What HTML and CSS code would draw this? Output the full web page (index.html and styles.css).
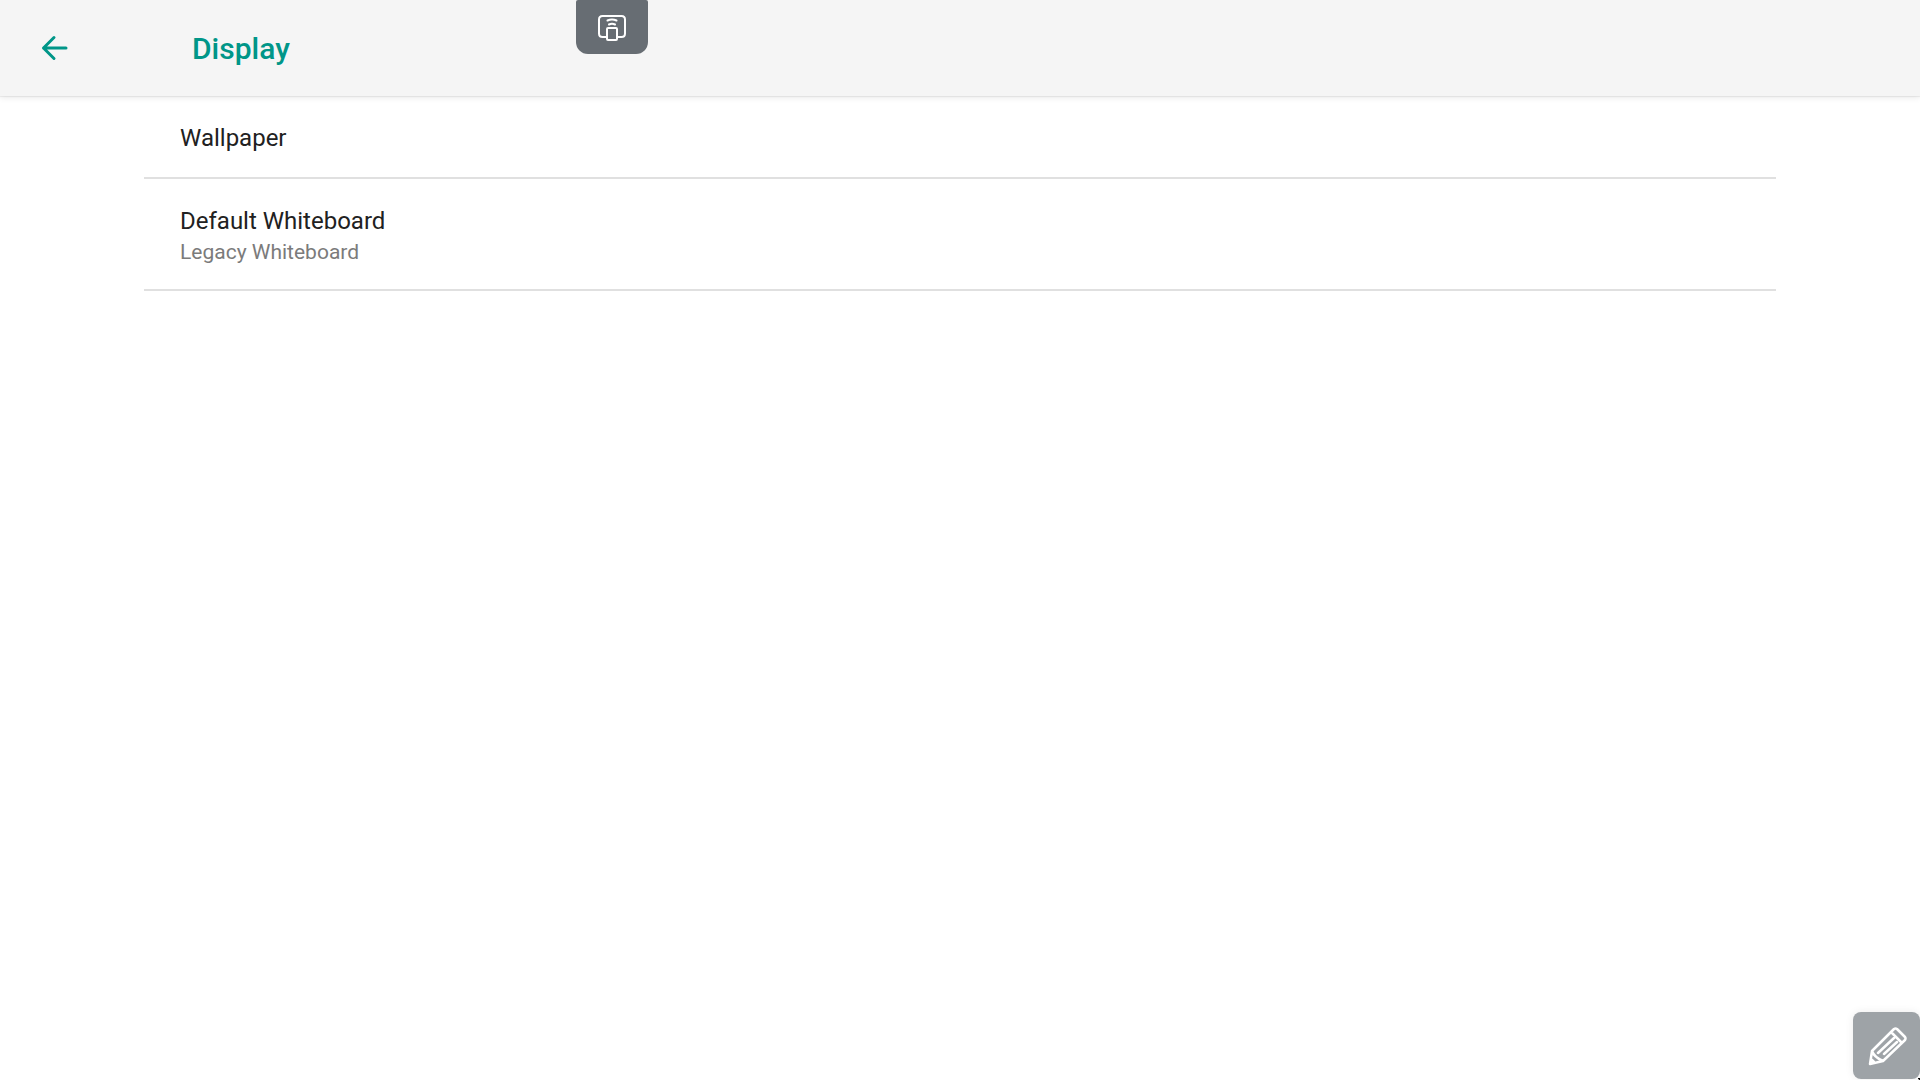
FILE: index.html
```html
<!DOCTYPE html>
<html lang="en">
<head>
<meta charset="utf-8">
<meta name="viewport" content="width=device-width, initial-scale=1">
<title>Display</title>
<link rel="stylesheet" href="styles.css">
</head>
<body>
<header class="app-bar">
  <button class="back" type="button" aria-label="Back">
    <svg class="back-icon" viewBox="0 0 28 26" aria-hidden="true"><path d="M14 2.500 3.500 13 14 23.500M3.500 13H26"/></svg>
  </button>
  <h1 class="title">Display</h1>
</header>
<main class="settings">
  <button class="row" type="button">
    <span class="row-title">Wallpaper</span>
  </button>
  <button class="row row-tall" type="button">
    <span class="row-title">Default Whiteboard</span>
    <span class="row-value">Legacy Whiteboard</span>
  </button>
</main>
<button class="share-tab" type="button" aria-label="Screen share">
  <svg class="share-icon" viewBox="0 0 28 27" aria-hidden="true">
    <path d="M8 23H4.500Q1 23 1 19.500V5.500Q1 2 4.500 2H23.500Q27 2 27 5.500V19.500Q27 23 23.500 23H20"/>
    <rect x="9" y="14" width="10" height="12" rx="1"/>
    <path d="M9.500 6.500Q14 4.500 18.500 6.500M11 10.500Q14 9 17 10.500"/>
  </svg>
</button>
<button class="pen" type="button" aria-label="Annotate">
  <svg class="pen-icon" viewBox="0 0 40 40" aria-hidden="true">
    <path stroke-width="2.500" d="M3 38 5 25 27 3Q28.500 2 30 3L38 11Q39 12.500 38 14L16 35ZM5 25Q7 31 16 35M24 6 35 17M11 27 27 12M17 28 30 16M3 38 4 33 7 36Z"/>
  </svg>
</button>
<svg class="pointer" viewBox="0 0 3 3" aria-hidden="true"><path d="M0 0H3V3H2L0 1Z"/></svg>
</body>
</html>
```
FILE: styles.css
```css
* {
  box-sizing: border-box;
}

body {
  margin: 0;
  min-height: 100vh;
  background: #fff;
  color: #212121;
  font-family: Roboto, "Liberation Sans", sans-serif;
}

button {
  margin: 0;
  padding: 0;
  border: 0;
  background: none;
  color: inherit;
  font: inherit;
  cursor: pointer;
}

svg {
  display: block;
  fill: none;
  stroke: currentColor;
  stroke-linecap: round;
  stroke-linejoin: round;
  stroke-width: 2;
}

.app-bar {
  display: flex;
  align-items: center;
  gap: 84px;
  height: 96px;
  background: #f5f5f5;
  color: #009688;
  box-shadow: 0 1px 1px rgba(0, 0, 0, 0.06), 0 2px 6px rgba(0, 0, 0, 0.08);
}

.back {
  display: grid;
  place-items: center;
  width: 108px;
  height: 96px;
}

.back-icon {
  width: 28px;
  height: 26px;
  stroke-width: 3;
}

.title {
  margin: 0;
  padding-top: 2px;
  font-size: 30px;
  font-weight: 500;
  line-height: 36px;
}

.settings {
  padding: 0 144px;
}

.row {
  display: flex;
  flex-direction: column;
  justify-content: center;
  width: 100%;
  padding: 28px 36px 24px;
  border-bottom: 2px solid #e0e0e0;
  text-align: left;
}

.row-tall {
  gap: 2px;
  padding: 28px 36px 22px;
}

.row-title {
  font-size: 24px;
  line-height: 29px;
}

.row-value {
  color: #7b7b7b;
  font-size: 21px;
  line-height: 29px;
}

.share-tab {
  position: absolute;
  top: 0;
  left: 30%;
  display: grid;
  place-items: center;
  width: 72px;
  height: 54px;
  border-radius: 2px 2px 12px 12px;
  background: #676d73;
  color: #fff;
}

.share-icon {
  width: 28px;
  height: 27px;
}

.pen {
  position: fixed;
  right: 0;
  bottom: 1px;
  display: grid;
  place-items: center;
  width: 67px;
  height: 67px;
  border-radius: 8px;
  background: #9ea3a7;
  color: #fff;
  box-shadow: 0 0 8px rgba(0, 0, 0, 0.08);
}

.pen-icon {
  width: 40px;
  height: 40px;
}

.pointer {
  position: fixed;
  right: 0;
  bottom: 0;
  width: 2px;
  height: 2px;
  fill: #000;
  stroke: none;
}
```
